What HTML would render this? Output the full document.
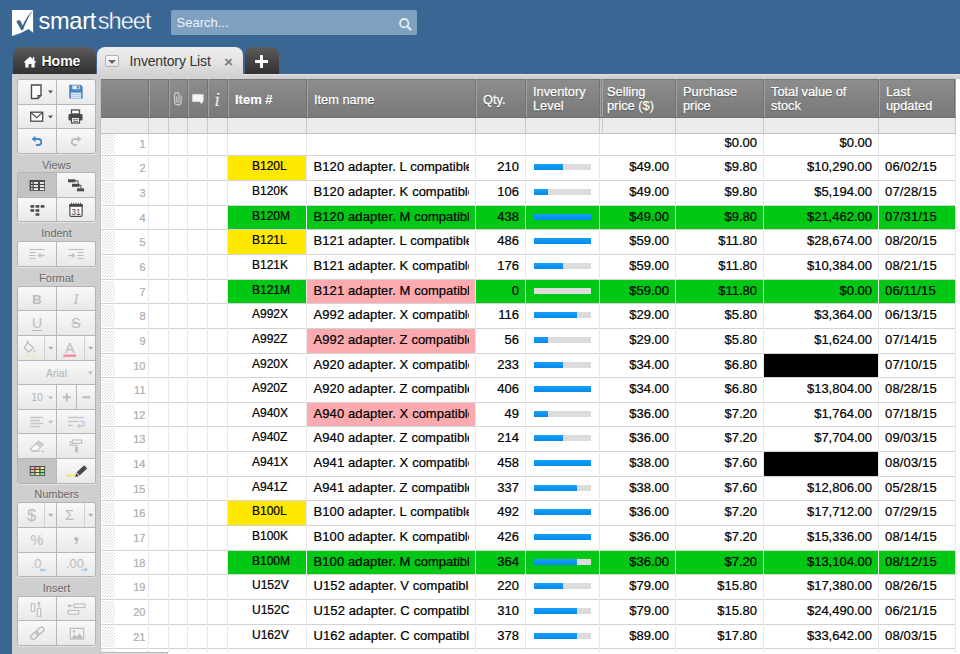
<!DOCTYPE html>
<html><head><meta charset="utf-8"><title>Inventory List - Smartsheet</title>
<style>
*{box-sizing:border-box;margin:0;padding:0}
html,body{width:960px;height:654px;overflow:hidden}
body{background:#3a6693;font-family:"Liberation Sans",Arial,sans-serif;position:relative;color:#000}
#logo{position:absolute;left:11.8px;top:9.8px}
#brand{position:absolute;left:38.5px;top:7.5px;font-size:23.6px;line-height:26px;color:#fff;white-space:nowrap}
#brand .a{letter-spacing:-0.3px}
#brand .b{-webkit-text-stroke:0.35px #3a6693;letter-spacing:-1px;margin-left:1.8px}
#search{position:absolute;left:170.5px;top:10px;width:246px;height:25px;background:#80a0c0;border-radius:2px;color:#eef3f8;font-size:13px;line-height:25px;padding-left:6px}
#search svg{position:absolute;left:227.3px;top:6.5px}
.tab{position:absolute;top:47px;height:27px;border-radius:8px 8px 0 0}
#thome{left:12.5px;width:83.3px;height:26.5px;background:linear-gradient(#5c5c5c,#474747 45%,#333);color:#fff;font-weight:bold;font-size:14px;line-height:29px}
#thome span{position:absolute;left:29px;top:0;text-shadow:0 1px 1px #000}
#thome svg{position:absolute;left:10.5px;top:8.5px}
#tinv{left:97px;width:146px;height:32.5px;background:linear-gradient(#eee,#e4e4e4 45%,#d2d2d2 84%);font-size:14px;line-height:29px;color:#333}
#tinv span.t{position:absolute;left:32.5px;top:0;letter-spacing:-0.15px}
#tinv span.x{position:absolute;left:127px;top:-0.5px;font-size:15.5px;color:#7a7a7a;-webkit-text-stroke:.5px #7a7a7a}
#tinv .dd{position:absolute;left:7.5px;top:8px;width:14.5px;height:12px;border:1px solid #b4b4b4;border-radius:2px;background:linear-gradient(#fdfdfd,#e4e4e4)}
#tinv .dd:after{content:"";position:absolute;left:2.5px;top:3.5px;border:4px solid transparent;border-top:4px solid #666;border-bottom:none}
#tplus{left:245px;width:33.5px;height:26.5px;background:linear-gradient(#5c5c5c,#474747 45%,#333);color:#fff}
#tplus:before{content:"";position:absolute;left:10px;top:13px;width:13px;height:3px;background:#fff}
#tplus:after{content:"";position:absolute;left:15px;top:8px;width:3px;height:13px;background:#fff}
#strip{position:absolute;left:12px;top:73.5px;width:948px;height:6px;background:linear-gradient(#e4e4e4,#d2d2d2 30%,#cbcbcb)}
#panel{position:absolute;left:12px;top:73.5px;width:89px;height:581px;background:#cfcfcf}#panel:after{content:"";position:absolute;left:88px;top:5.5px;width:1px;bottom:0;background:#c2c2c2}
.lbl{position:absolute;left:0;width:89px;text-align:center;font-size:11px;line-height:14px;color:#666;text-shadow:0 1px 0 #e4e4e4}
.grp{position:absolute;left:5px;width:79px;border:1px solid #b3b3b3;border-radius:2.5px;background:#b7b7b7;overflow:hidden;box-shadow:0 1px 0 #e2e2e2}
.bt{position:absolute;background:linear-gradient(#f8f8f8,#e9e9e9);overflow:hidden}
.bt.sel{background:#c3c3c3}
.bt svg{position:absolute;left:0;top:0}
.bt span{position:absolute;left:0;right:0;text-align:center;color:#bdbdbd}
/* grid */
#grid{position:absolute;left:101px;top:79px;width:859px;height:575px;background:#fff;overflow:hidden}
#hdr{z-index:4;position:absolute;left:0;top:0;width:855px;overflow:hidden;height:39px;background:linear-gradient(#777 0,#777 1px,#8d8d8d 1px,#838383 50%,#797979);border-bottom:1px solid #727272}
.h{position:absolute;top:0;height:38px;border-right:1px solid #a0a0a0;box-shadow:inset -1px 0 0 #727272;color:#fff;font-size:12.8px;line-height:14.2px;padding:6px 0 0 6px;-webkit-text-stroke:.25px #fff;text-shadow:0 1px 1px rgba(0,0,0,.45);white-space:nowrap;overflow:hidden}
.h.one{padding-top:14px}
.h.bold{font-weight:bold;font-size:13px}
#flt{z-index:4;position:absolute;left:0;top:39px;width:855px;height:16px;background:#ebebeb;border-bottom:1px solid #c4c4c4}
#flt i{position:absolute;top:0;height:15px;width:1px;background:#c9c9c9}
.r{position:absolute;left:0;width:855px;border-bottom:1px solid #d3d3d3;background:#fff;font-size:13px;line-height:15px;white-space:nowrap;-webkit-text-stroke:.22px currentColor}
.c{position:absolute;top:0;bottom:0;border-right:0;overflow:hidden;padding:2.5px 0 0 0}
.r .c:after{content:"";position:absolute;right:0;top:0;bottom:0;width:0}
.vl{position:absolute;top:54px;width:1px;height:521px;background:#e9e9e9;z-index:2}
.hatch{position:absolute;left:1px;top:1px;bottom:1px;width:13px;background:repeating-linear-gradient(135deg,#fff 0,#fff 1.1px,#dcdcdc 1.1px,#dcdcdc 2.12px)}
.rn{color:#acacac;font-size:11px;text-align:right;padding:4.5px 2.5px 0 0}
.c0{padding-left:24px;padding-top:3.2px;font-size:12px;line-height:14px}
.c1{padding-left:6.5px;padding-right:7px;background:#fff;letter-spacing:.11px}.c1 u{text-decoration:none;letter-spacing:0}
.c1:before{content:"";position:absolute;right:0;top:0;bottom:0;width:6px;background:inherit}
.c2,.c4,.c5,.c6{text-align:right;padding-right:6px}
.c7{padding-left:6px;letter-spacing:.15px}
.y{background:#ffe800}
.gg{background:#00c814}
.p{background:#fbabb0}
.k{background:#000}
.g .c0,.g .c1,.g .c2,.g .c3,.g .c4,.g .c5,.g .c6,.g .c7{}
.bar{position:absolute;left:8px;top:7.5px;width:57px;height:6px;background:#dcdcdc;display:block}
.bar i{display:block;height:6px;background:linear-gradient(#16a0fb,#0489ea)}
#bot{position:absolute;left:0;top:572.5px;width:859px;height:3px;background:#fff;z-index:3}#bot b{position:absolute;left:0;top:0;width:67px;height:3px;background:#dadada;border-top:1px solid #b9b9b9;border-right:1px solid #b9b9b9}
.rn{left:0px;width:47px}
.e1{left:48px;width:19px}
.e2{left:68px;width:18px}
.e3{left:87px;width:19px}
.e4{left:107px;width:19px}
.c0{left:127px;width:78px}
.c1{left:206px;width:168px}
.c2{left:375px;width:49px}
.c3{left:425px;width:73px}
.c4{left:499px;width:75px}
.c5{left:575px;width:87px}
.c6{left:663px;width:114px}
.c7{left:778px;width:76px}
</style></head><body>
<svg id="logo" width="22" height="27" viewBox="0 0 22 27"><path d="M0,0H21.1V22.7L16.6,18.9Q9,23.6 0,25.9Z" fill="#fff"/><path d="M4.4,11.4Q6.4,9.6 8.2,10.6L10.7,15.4Q14.6,6.2 21.1,0.2Q15.2,8.4 10.9,20.2L9.3,20.2Z" fill="#3a6693"/></svg>
<div id="brand"><span class="a">smart</span><span class="b">sheet</span></div>
<div id="search">Search...<svg width="16" height="16" viewBox="0 0 16 16"><circle cx="6.2" cy="6.2" r="4.2" fill="none" stroke="#e3eaf2" stroke-width="1.8"/><path d="M9.4 9.4L12.6 12.6" stroke="#e3eaf2" stroke-width="2.1" stroke-linecap="round"/></svg></div>
<div id="strip"></div>
<div id="thome" class="tab"><svg width="14" height="12.3" viewBox="0 0 16 14"><path d="M8,0.5L0.5,7.5H2.6V13H6.4V9H9.6V13H13.4V7.5H15.5Z" fill="#fff"/><rect x="11.2" y="1.2" width="1.8" height="3.5" fill="#fff"/></svg><span>Home</span></div>
<div id="tinv" class="tab"><b class="dd"></b><span class="t">Inventory List</span><span class="x">×</span></div>
<div id="tplus" class="tab"></div>
<div id="panel">
<div class="lbl" style="top:84.0px">Views</div>
<div class="lbl" style="top:152.8px">Indent</div>
<div class="lbl" style="top:197.2px">Format</div>
<div class="lbl" style="top:413.6px">Numbers</div>
<div class="lbl" style="top:507.2px">Insert</div>
<div class="grp" style="top:5.5px;height:75px">
<div class="bt" style="left:0px;top:0px;width:38px;height:24px"><svg width="38" height="24" viewBox="0 0 38 24"><path d="M13.5,5h9.5v10.5l-3,3h-6.5z" fill="#fff" stroke="#4a4a4a" stroke-width="1.4"/><path d="M23,15.5h-3v3" fill="none" stroke="#4a4a4a" stroke-width="1.2"/><path d="M30.0,10.5h5l-2.5,3z" fill="#555"/></svg></div>
<div class="bt" style="left:39px;top:0px;width:38px;height:24px"><svg width="38" height="24" viewBox="0 0 38 24"><path d="M12.2,4.8h11.5l2,2v11.8h-13.5z" fill="#4d84bf"/><rect x="15.3" y="5.6" width="7.4" height="3.6" fill="#e4edf7"/><rect x="20" y="6.2" width="1.6" height="2.4" fill="#3d6fa5"/><rect x="13.9" y="12.6" width="10.2" height="5.6" fill="#dce8f4"/><path d="M13.9,14.5h10.2M13.9,16.4h10.2" stroke="#a9c4e2" stroke-width=".8"/></svg></div>
<div class="bt" style="left:0px;top:25px;width:38px;height:23px"><svg width="38" height="24" viewBox="0 0 38 24"><rect x="12.7" y="7.2" width="12" height="9" fill="#fff" stroke="#4a4a4a" stroke-width="1.3"/><path d="M12.7,7.4l6,5.2l6,-5.2" fill="none" stroke="#4a4a4a" stroke-width="1.2"/><path d="M30.0,10.5h5l-2.5,3z" fill="#555"/></svg></div>
<div class="bt" style="left:39px;top:25px;width:38px;height:23px"><svg width="38" height="24" viewBox="0 0 38 24"><rect x="14.5" y="5" width="8" height="4" fill="#fff" stroke="#4a4a4a" stroke-width="1.3"/><rect x="11.5" y="9" width="14" height="6.5" rx="1" fill="#4a4a4a"/><rect x="14.5" y="12.5" width="8" height="5.5" fill="#fff" stroke="#4a4a4a" stroke-width="1.2"/><path d="M16,14.7h5M16,16.4h5" stroke="#4a4a4a" stroke-width=".8"/></svg></div>
<div class="bt" style="left:0px;top:49px;width:38px;height:24px"><svg width="38" height="24" viewBox="0 0 38 24"><path d="M16,10h4.3a3,3 0 0 1 0,6h-2.3" fill="none" stroke="#4685c6" stroke-width="1.8"/><path d="M13.6,10l3.8,-3.2v6.4z" fill="#4685c6"/></svg></div>
<div class="bt" style="left:39px;top:49px;width:38px;height:24px"><svg width="38" height="24" viewBox="0 0 38 24"><path d="M22,10h-4.3a3,3 0 0 0 0,6h2.3" fill="none" stroke="#bdbdbd" stroke-width="1.8"/><path d="M24.4,10l-3.8,-3.2v6.4z" fill="#bdbdbd"/></svg></div>
</div>
<div class="grp" style="top:98.5px;height:50px">
<div class="bt sel" style="left:0px;top:0px;width:38px;height:24px"><svg width="38" height="24" viewBox="0 0 38 24"><rect x="11.6" y="7" width="15.4" height="10.8" fill="#484848"/><g fill="#fff"><rect x="13.2" y="9.1" width="1.3" height="1.7"/><rect x="15.8" y="9.1" width="4.2" height="1.7"/><rect x="22" y="9.1" width="4.2" height="1.7"/><rect x="13.2" y="12.2" width="1.3" height="1.7"/><rect x="15.8" y="12.2" width="4.2" height="1.7"/><rect x="22" y="12.2" width="4.2" height="1.7"/><rect x="13.2" y="15.2" width="1.3" height="1.7"/><rect x="15.8" y="15.2" width="4.2" height="1.7"/><rect x="22" y="15.2" width="4.2" height="1.7"/></g></svg></div>
<div class="bt" style="left:39px;top:0px;width:38px;height:24px"><svg width="38" height="24" viewBox="0 0 38 24"><rect x="11" y="6.3" width="7.5" height="3" fill="#4a4a4a"/><rect x="15" y="10.8" width="7.5" height="3" fill="#4a4a4a"/><rect x="20" y="15.3" width="7" height="3" fill="#4a4a4a"/><path d="M18.5,7.8h2.5v3M22.5,12.3h1.5v3" fill="none" stroke="#4a4a4a" stroke-width="1"/></svg></div>
<div class="bt" style="left:0px;top:25px;width:38px;height:23px"><svg width="38" height="24" viewBox="0 0 38 24"><g fill="#4a4a4a"><rect x="12.5" y="7.1" width="3.7" height="2.6"/><rect x="17.6" y="7.1" width="3.7" height="2.6"/><rect x="22.7" y="7.1" width="3.7" height="2.6"/><rect x="12.5" y="11.2" width="3.7" height="2.6"/><rect x="17.6" y="11.2" width="3.7" height="2.6"/><rect x="17.6" y="15.2" width="3.7" height="2.6"/></g></svg></div>
<div class="bt" style="left:39px;top:25px;width:38px;height:23px"><svg width="38" height="24" viewBox="0 0 38 24"><rect x="12.9" y="6.7" width="12.2" height="11.6" rx="1" fill="#fff" stroke="#4a4a4a" stroke-width="1.2"/><rect x="12.3" y="6" width="13.4" height="2.8" fill="#4a4a4a"/><path d="M14.5,4.8v2M16.7,4.8v2M19,4.8v2M21.3,4.8v2M23.5,4.8v2" stroke="#4a4a4a" stroke-width="1"/><text x="19" y="17" font-family="Liberation Sans, Arial, sans-serif" font-size="8.6" text-anchor="middle" fill="#4a4a4a">31</text></svg></div>
</div>
<div class="grp" style="top:167.5px;height:26px">
<div class="bt" style="left:0px;top:0px;width:38px;height:24px"><svg width="38" height="24" viewBox="0 0 38 24"><path d="M11.5,7.5h15M11.5,10.5h6M11.5,13.5h6M11.5,16.5h6" stroke="#bcbcbc" stroke-width="1.1"/><path d="M26.5,13.5h-5" stroke="#bcbcbc" stroke-width="1.4"/><path d="M19.6,13.5l3,-2.4v4.8z" fill="#bcbcbc"/></svg></div>
<div class="bt" style="left:39px;top:0px;width:38px;height:24px"><svg width="38" height="24" viewBox="0 0 38 24"><path d="M11.5,7.5h15M20.5,10.5h6M20.5,13.5h6M20.5,16.5h6" stroke="#bcbcbc" stroke-width="1.1"/><path d="M11.5,13.5h5" stroke="#bcbcbc" stroke-width="1.4"/><path d="M18.4,13.5l-3,-2.4v4.8z" fill="#bcbcbc"/></svg></div>
</div>
<div class="grp" style="top:212.5px;height:198px">
<div class="bt" style="left:0px;top:0px;width:38px;height:23px"><span style="font-size:13px;line-height:15px;top:5px;color:#bcbcbc;font-weight:bold">B</span></div>
<div class="bt" style="left:39px;top:0px;width:38px;height:23px"><span style="font-size:15px;line-height:17px;top:3.5px;color:#bcbcbc;font-style:italic;font-family:'Liberation Serif',serif">I</span></div>
<div class="bt" style="left:0px;top:24px;width:38px;height:24px"><span style="font-size:14px;line-height:16px;top:3.5px;color:#bcbcbc;text-decoration:underline;text-underline-offset:2px">U</span></div>
<div class="bt" style="left:39px;top:24px;width:38px;height:24px"><span style="font-size:14px;line-height:16px;top:4px;color:#bcbcbc;text-decoration:line-through">S</span></div>
<div class="bt" style="left:0px;top:49px;width:25.5px;height:24px"><svg width="25" height="24" viewBox="0 0 25 24"><path d="M9.5,6.5l5.8,5.3l-4.3,4.4l-4.6,-4.4z" fill="none" stroke="#bcbcbc" stroke-width="1.2"/><path d="M9.5,6.5v-2.5" stroke="#bcbcbc" stroke-width="1.1"/><path d="M16.6,13.2q1.6,2.3 0,3.2q-1.6,-0.9 0,-3.2z" fill="#bcbcbc"/><rect x="6" y="18.6" width="12" height="2.2" fill="#ececbc"/></svg></div>
<div class="bt" style="left:26.5px;top:49px;width:12.5px;height:24px;border-left:1px solid #d2d2d2;margin-left:-1px;padding-left:0"><svg width="12" height="24" viewBox="0 0 12 24"><path d="M3.3,10.7h5l-2.5,3z" fill="#aaa"/></svg></div>
<div class="bt" style="left:39px;top:49px;width:26.5px;height:24px"><svg width="26" height="24" viewBox="0 0 26 24"><text x="12.8" y="16.6" font-family="Liberation Sans, Arial, sans-serif" font-size="14.5" text-anchor="middle" fill="#bcbcbc">A</text><rect x="6.3" y="18.5" width="12.8" height="2.4" fill="#ee8d94"/></svg></div>
<div class="bt" style="left:66.5px;top:49px;width:11.5px;height:24px;border-left:1px solid #d2d2d2;margin-left:-1px;padding-left:0"><svg width="12" height="24" viewBox="0 0 12 24"><path d="M3.3,10.7h5l-2.5,3z" fill="#aaa"/></svg></div>
<div class="bt" style="left:0px;top:74px;width:77px;height:23px"><span style="font-size:10.5px;line-height:14px;top:4.5px;color:#b4b4b4">Arial</span><svg width="77" height="24" viewBox="0 0 77 24" style="left:0"><path d="M69.8,10.5h5l-2.5,3z" fill="#bbb"/></svg></div>
<div class="bt" style="left:0px;top:98px;width:38px;height:24px"><span style="font-size:10.5px;line-height:14px;top:4.5px;color:#b4b4b4">10</span><svg width="38" height="24" viewBox="0 0 38 24"><path d="M30.1,11.5h5l-2.5,3z" fill="#bbb"/></svg></div>
<div class="bt" style="left:39px;top:98px;width:19px;height:24px"><svg width="19" height="24" viewBox="0 0 19 24"><path d="M5.8,12.3h8M9.8,8.3v8" stroke="#bcbcbc" stroke-width="2"/></svg></div>
<div class="bt" style="left:59px;top:98px;width:18px;height:24px"><svg width="19" height="24" viewBox="0 0 19 24"><path d="M5.5,12.3h7.6" stroke="#bcbcbc" stroke-width="2"/></svg></div>
<div class="bt" style="left:0px;top:123px;width:38px;height:23px"><svg width="38" height="24" viewBox="0 0 38 24"><path d="M12.3,7.6h13M12.3,10.5h9.6M12.3,13.5h13M12.3,16.4h9.6" stroke="#c6c6c6" stroke-width="1.5"/><path d="M30.1,10.8h5l-2.5,3z" fill="#bbb"/></svg></div>
<div class="bt" style="left:39px;top:123px;width:38px;height:23px"><svg width="38" height="24" viewBox="0 0 38 24"><path d="M11,7.6h16M11,11.5h11M11,15.4h5" stroke="#c6c6c6" stroke-width="1.5"/><path d="M23.5,11.5h1.5a2.2,2.2 0 0 1 0,4.4h-2.5" fill="none" stroke="#b4cdea" stroke-width="1.4"/><path d="M19.6,15.9l3.2,-2.4v4.8z" fill="#b4cdea"/></svg></div>
<div class="bt" style="left:0px;top:147px;width:38px;height:24px"><svg width="38" height="24" viewBox="0 0 38 24"><path d="M20.3,7.2l4.8,2.9l-5.6,6.6h-5l-2.2,-1.5z" fill="#fbfbfb" stroke="#bcbcbc" stroke-width="1.1"/><path d="M20.3,7.2l4.8,2.9l-2.9,3.4l-4.9,-2.9z" fill="#cfcfcf"/><path d="M13,17.3h13" stroke="#bcbcbc" stroke-width="1" stroke-dasharray="6 1.2 2 1.2"/></svg></div>
<div class="bt" style="left:39px;top:147px;width:38px;height:24px"><svg width="38" height="24" viewBox="0 0 38 24"><rect x="15.3" y="6" width="9.4" height="3.4" rx=".6" fill="#f6f6f6" stroke="#bcbcbc" stroke-width="1.2"/><path d="M15.3,7.7h-2v3.6h6.2v2" fill="none" stroke="#bcbcbc" stroke-width="1.1"/><rect x="18.1" y="12.8" width="2.8" height="5.6" rx=".6" fill="#bcbcbc"/></svg></div>
<div class="bt sel" style="left:0px;top:172px;width:38px;height:24px"><svg width="38" height="24" viewBox="0 0 38 24"><rect x="11.7" y="7" width="15.4" height="9.8" fill="#4a4a4a"/><rect x="12.7" y="8" width="3.7" height="2" fill="#f7a3ab"/><rect x="17.6" y="8" width="3.7" height="2" fill="#f7a3ab"/><rect x="22.5" y="8" width="3.7" height="2" fill="#f6ee7c"/><rect x="12.7" y="11" width="3.7" height="2" fill="#f7a3ab"/><rect x="17.6" y="11" width="3.7" height="2" fill="#f6ee7c"/><rect x="22.5" y="11" width="3.7" height="2" fill="#7fe89b"/><rect x="12.7" y="14" width="3.7" height="2" fill="#7fe89b"/><rect x="17.6" y="14" width="3.7" height="2" fill="#f6ee7c"/><rect x="22.5" y="14" width="3.7" height="2" fill="#7fe89b"/></svg></div>
<div class="bt" style="left:39px;top:172px;width:38px;height:24px"><svg width="38" height="24" viewBox="0 0 38 24"><path d="M19.6,13.2l7.6,-7l3,3.2l-7.6,7z" fill="#484848"/><path d="M19,13.9l2.9,3.1l-3.6,1.2z" fill="#484848"/><rect x="9.2" y="15.3" width="8.8" height="2.3" fill="#efe873"/></svg></div>
</div>
<div class="grp" style="top:428.5px;height:75px">
<div class="bt" style="left:0px;top:0px;width:25.5px;height:24px"><svg width="26" height="24" viewBox="0 0 26 24"><text x="13.5" y="17.8" font-family="Liberation Sans, Arial, sans-serif" font-size="16.5" text-anchor="middle" fill="#bcbcbc">$</text></svg></div>
<div class="bt" style="left:26.5px;top:0px;width:12.5px;height:24px;border-left:1px solid #d2d2d2;margin-left:-1px;padding-left:0"><svg width="12" height="24" viewBox="0 0 12 24"><path d="M3.3,10.7h5l-2.5,3z" fill="#aaa"/></svg></div>
<div class="bt" style="left:39px;top:0px;width:26.5px;height:24px"><svg width="26" height="24" viewBox="0 0 26 24"><text x="12.5" y="17" font-family="Liberation Sans, Arial, sans-serif" font-size="14.5" text-anchor="middle" fill="#bcbcbc">Σ</text></svg></div>
<div class="bt" style="left:66.5px;top:0px;width:11.5px;height:24px;border-left:1px solid #d2d2d2;margin-left:-1px;padding-left:0"><svg width="12" height="24" viewBox="0 0 12 24"><path d="M3.3,10.7h5l-2.5,3z" fill="#aaa"/></svg></div>
<div class="bt" style="left:0px;top:25px;width:38px;height:24px"><span style="font-size:14.5px;line-height:16.5px;top:4px;color:#bcbcbc;">%</span></div>
<div class="bt" style="left:39px;top:25px;width:38px;height:24px"><svg width="38" height="24" viewBox="0 0 38 24"><circle cx="19.2" cy="10.9" r="2.1" fill="#bcbcbc"/><path d="M21.3,10.9q0.2,4 -3.2,5.6l-0.4,-0.9q2,-1.3 1.6,-3.4z" fill="#bcbcbc"/></svg></div>
<div class="bt" style="left:0px;top:50px;width:38px;height:23px"><span style="font-size:13px;line-height:15px;top:3px;color:#bcbcbc;right:2px">.0</span><svg width="38" height="24" viewBox="0 0 38 24"><path d="M23,17h5" stroke="#9cc3ea" stroke-width="1.3"/><path d="M21.6,17l2.6,-2.1v4.2z" fill="#9cc3ea"/></svg></div>
<div class="bt" style="left:39px;top:50px;width:38px;height:23px"><span style="font-size:13px;line-height:15px;top:3px;color:#bcbcbc;right:2px">.00</span><svg width="38" height="24" viewBox="0 0 38 24"><path d="M24.5,16.6h5" stroke="#9cc3ea" stroke-width="1.3"/><path d="M30.9,16.6l-2.6,-2.1v4.2z" fill="#9cc3ea"/></svg></div>
</div>
<div class="grp" style="top:522.5px;height:50px">
<div class="bt" style="left:0px;top:0px;width:38px;height:23px"><svg width="38" height="24" viewBox="0 0 38 24"><g transform="translate(1,0.5)"><rect x="12.3" y="6.3" width="3.4" height="7.5" fill="#f4f4f4" stroke="#bcbcbc" stroke-width="1.1"/><rect x="18.3" y="10.8" width="3.4" height="8" fill="#f4f4f4" stroke="#bcbcbc" stroke-width="1.1"/><path d="M20,9.3v-4.3" stroke="#bcbcbc" stroke-width="1.2"/><path d="M20,4l-2,2.5h4z" fill="#bcbcbc"/></g></svg></div>
<div class="bt" style="left:39px;top:0px;width:38px;height:23px"><svg width="38" height="24" viewBox="0 0 38 24"><rect x="17.3" y="7" width="10.6" height="3.6" fill="#f4f4f4" stroke="#bcbcbc" stroke-width="1.1"/><rect x="11.3" y="13.5" width="10.4" height="3.6" fill="#f4f4f4" stroke="#bcbcbc" stroke-width="1.1"/><path d="M11.5,8.8h4.3" stroke="#bcbcbc" stroke-width="1.2"/><path d="M10.3,8.8l2.6,-2v4z" fill="#bcbcbc"/></svg></div>
<div class="bt" style="left:0px;top:24px;width:38px;height:24px"><svg width="38" height="24" viewBox="0 0 38 24"><g fill="none" stroke="#bcbcbc" stroke-width="1.4" transform="rotate(-42 19.3 12.2)"><rect x="11.3" y="9.8" width="9" height="4.8" rx="2.4"/><rect x="18.3" y="9.8" width="9" height="4.8" rx="2.4"/></g></svg></div>
<div class="bt" style="left:39px;top:24px;width:38px;height:24px"><svg width="38" height="24" viewBox="0 0 38 24"><g transform="translate(1,0.7)"><rect x="12.3" y="6.7" width="13.4" height="10.6" fill="#f1f1f1" stroke="#bcbcbc" stroke-width="1.2"/><path d="M13,16.7l3.6,-4l2.4,2.3l2.6,-3.3l3.6,5z" fill="#bcbcbc"/><circle cx="16" cy="9.8" r="1.2" fill="#bcbcbc"/></g></svg></div>
</div>
</div>
<div id="grid">
 <div id="hdr">
<div class="h " style="left:0px;width:49px"></div>
<div class="h " style="left:49px;width:20px"></div>
<div class="h " style="left:69px;width:19px"><svg width="10" height="15" viewBox="0 0 10 15" style="position:absolute;left:3.3px;top:12.3px"><path d="M8.2,4.6v6a3.3,3.3 0 0 1 -6.6,0v-6.8a2.2,2.2 0 0 1 4.4,0v6.4a1.1,1.1 0 0 1 -2.2,0v-5" fill="none" stroke="#cfcfcf" stroke-width="1.15"/></svg></div>
<div class="h " style="left:88px;width:20px"><svg width="12" height="12" viewBox="0 0 12 12" style="position:absolute;left:3px;top:15px"><path d="M0.3,0.3h11.2v7.4h-1.3v2.6l-2.8,-2.6h-7.1z" fill="#f4f4f4"/></svg></div>
<div class="h " style="left:108px;width:20px"><span style="position:absolute;left:5.5px;top:9.5px;font-family:'Liberation Serif',serif;font-style:italic;font-size:19px;line-height:21px;color:#ececec;-webkit-text-stroke:.3px #ececec">i</span></div>
<div class="h one bold" style="left:128px;width:79px">Item #</div>
<div class="h one" style="left:207px;width:169px">Item name</div>
<div class="h one" style="left:376px;width:50px">Qty.</div>
<div class="h " style="left:426px;width:74px">Inventory<br>Level</div>
<div class="h " style="left:500px;width:76px">Selling<br>price ($)</div>
<div class="h " style="left:576px;width:88px">Purchase<br>price</div>
<div class="h " style="left:664px;width:115px">Total value of<br>stock</div>
<div class="h " style="left:779px;width:76px">Last<br>updated</div>
<div style="position:absolute;left:501px;top:0;width:1px;height:38px;background:#a4a4a4"></div>
 </div>
 <div id="flt"><i style="left:47px"></i><i style="left:67px"></i><i style="left:86px"></i><i style="left:106px"></i><i style="left:126px"></i><i style="left:205px"></i><i style="left:374px"></i><i style="left:424px"></i><i style="left:498px"></i><i style="left:574px"></i><i style="left:662px"></i><i style="left:777px"></i><i style="left:854px"></i><i style="left:501px"></i></div>
<div class="r" style="top:53px;height:24px">
<b class="hatch"></b><span class="c rn">1</span>
<span class="c e1"></span>
<span class="c e2"></span>
<span class="c e3"></span>
<span class="c e4"></span>
<span class="c c0"></span>
<span class="c c1"></span>
<span class="c c2"></span>
<span class="c c3"></span>
<span class="c c4"></span>
<span class="c c5">$0.00</span>
<span class="c c6">$0.00</span>
<span class="c c7"></span>
</div>
<div class="r" style="top:77px;height:25px">
<b class="hatch"></b><span class="c rn">2</span>
<span class="c e1"></span>
<span class="c e2"></span>
<span class="c e3"></span>
<span class="c e4"></span>
<span class="c c0 y">B120L</span>
<span class="c c1">B120 adapter. L <u>compatible</u></span>
<span class="c c2">210</span>
<span class="c c3"><i class="bar"><i style="width:50%"></i></i></span>
<span class="c c4">$49.00</span>
<span class="c c5">$9.80</span>
<span class="c c6">$10,290.00</span>
<span class="c c7">06/02/15</span>
</div>
<div class="r" style="top:102px;height:25px">
<b class="hatch"></b><span class="c rn">3</span>
<span class="c e1"></span>
<span class="c e2"></span>
<span class="c e3"></span>
<span class="c e4"></span>
<span class="c c0">B120K</span>
<span class="c c1">B120 adapter. K <u>compatible</u></span>
<span class="c c2">106</span>
<span class="c c3"><i class="bar"><i style="width:25%"></i></i></span>
<span class="c c4">$49.00</span>
<span class="c c5">$9.80</span>
<span class="c c6">$5,194.00</span>
<span class="c c7">07/28/15</span>
</div>
<div class="r g" style="top:127px;height:24px">
<b class="hatch"></b><span class="c rn">4</span>
<span class="c e1"></span>
<span class="c e2"></span>
<span class="c e3"></span>
<span class="c e4"></span>
<span class="c c0 gg">B120M</span>
<span class="c c1 gg">B120 adapter. M <u>compatible</u></span>
<span class="c c2 gg">438</span>
<span class="c c3 gg"><i class="bar"><i style="width:100%"></i></i></span>
<span class="c c4 gg">$49.00</span>
<span class="c c5 gg">$9.80</span>
<span class="c c6 gg">$21,462.00</span>
<span class="c c7 gg">07/31/15</span>
</div>
<div class="r" style="top:151px;height:25px">
<b class="hatch"></b><span class="c rn">5</span>
<span class="c e1"></span>
<span class="c e2"></span>
<span class="c e3"></span>
<span class="c e4"></span>
<span class="c c0 y">B121L</span>
<span class="c c1">B121 adapter. L <u>compatible</u></span>
<span class="c c2">486</span>
<span class="c c3"><i class="bar"><i style="width:100%"></i></i></span>
<span class="c c4">$59.00</span>
<span class="c c5">$11.80</span>
<span class="c c6">$28,674.00</span>
<span class="c c7">08/20/15</span>
</div>
<div class="r" style="top:176px;height:25px">
<b class="hatch"></b><span class="c rn">6</span>
<span class="c e1"></span>
<span class="c e2"></span>
<span class="c e3"></span>
<span class="c e4"></span>
<span class="c c0">B121K</span>
<span class="c c1">B121 adapter. K <u>compatible</u></span>
<span class="c c2">176</span>
<span class="c c3"><i class="bar"><i style="width:50%"></i></i></span>
<span class="c c4">$59.00</span>
<span class="c c5">$11.80</span>
<span class="c c6">$10,384.00</span>
<span class="c c7">08/21/15</span>
</div>
<div class="r g" style="top:201px;height:24px">
<b class="hatch"></b><span class="c rn">7</span>
<span class="c e1"></span>
<span class="c e2"></span>
<span class="c e3"></span>
<span class="c e4"></span>
<span class="c c0 gg">B121M</span>
<span class="c c1 p">B121 adapter. M <u>compatible</u></span>
<span class="c c2 gg">0</span>
<span class="c c3 gg"><i class="bar"><i style="width:0%"></i></i></span>
<span class="c c4 gg">$59.00</span>
<span class="c c5 gg">$11.80</span>
<span class="c c6 gg">$0.00</span>
<span class="c c7 gg">06/11/15</span>
</div>
<div class="r" style="top:225px;height:25px">
<b class="hatch"></b><span class="c rn">8</span>
<span class="c e1"></span>
<span class="c e2"></span>
<span class="c e3"></span>
<span class="c e4"></span>
<span class="c c0">A992X</span>
<span class="c c1">A992 adapter. X <u>compatible</u></span>
<span class="c c2">116</span>
<span class="c c3"><i class="bar"><i style="width:75%"></i></i></span>
<span class="c c4">$29.00</span>
<span class="c c5">$5.80</span>
<span class="c c6">$3,364.00</span>
<span class="c c7">06/13/15</span>
</div>
<div class="r" style="top:250px;height:25px">
<b class="hatch"></b><span class="c rn">9</span>
<span class="c e1"></span>
<span class="c e2"></span>
<span class="c e3"></span>
<span class="c e4"></span>
<span class="c c0">A992Z</span>
<span class="c c1 p">A992 adapter. Z <u>compatible</u></span>
<span class="c c2">56</span>
<span class="c c3"><i class="bar"><i style="width:25%"></i></i></span>
<span class="c c4">$29.00</span>
<span class="c c5">$5.80</span>
<span class="c c6">$1,624.00</span>
<span class="c c7">07/14/15</span>
</div>
<div class="r" style="top:275px;height:24px">
<b class="hatch"></b><span class="c rn">10</span>
<span class="c e1"></span>
<span class="c e2"></span>
<span class="c e3"></span>
<span class="c e4"></span>
<span class="c c0">A920X</span>
<span class="c c1">A920 adapter. X <u>compatible</u></span>
<span class="c c2">233</span>
<span class="c c3"><i class="bar"><i style="width:50%"></i></i></span>
<span class="c c4">$34.00</span>
<span class="c c5">$6.80</span>
<span class="c c6 k"></span>
<span class="c c7">07/10/15</span>
</div>
<div class="r" style="top:299px;height:25px">
<b class="hatch"></b><span class="c rn">11</span>
<span class="c e1"></span>
<span class="c e2"></span>
<span class="c e3"></span>
<span class="c e4"></span>
<span class="c c0">A920Z</span>
<span class="c c1">A920 adapter. Z <u>compatible</u></span>
<span class="c c2">406</span>
<span class="c c3"><i class="bar"><i style="width:100%"></i></i></span>
<span class="c c4">$34.00</span>
<span class="c c5">$6.80</span>
<span class="c c6">$13,804.00</span>
<span class="c c7">08/28/15</span>
</div>
<div class="r" style="top:324px;height:24px">
<b class="hatch"></b><span class="c rn">12</span>
<span class="c e1"></span>
<span class="c e2"></span>
<span class="c e3"></span>
<span class="c e4"></span>
<span class="c c0">A940X</span>
<span class="c c1 p">A940 adapter. X <u>compatible</u></span>
<span class="c c2">49</span>
<span class="c c3"><i class="bar"><i style="width:25%"></i></i></span>
<span class="c c4">$36.00</span>
<span class="c c5">$7.20</span>
<span class="c c6">$1,764.00</span>
<span class="c c7">07/18/15</span>
</div>
<div class="r" style="top:348px;height:25px">
<b class="hatch"></b><span class="c rn">13</span>
<span class="c e1"></span>
<span class="c e2"></span>
<span class="c e3"></span>
<span class="c e4"></span>
<span class="c c0">A940Z</span>
<span class="c c1">A940 adapter. Z <u>compatible</u></span>
<span class="c c2">214</span>
<span class="c c3"><i class="bar"><i style="width:50%"></i></i></span>
<span class="c c4">$36.00</span>
<span class="c c5">$7.20</span>
<span class="c c6">$7,704.00</span>
<span class="c c7">09/03/15</span>
</div>
<div class="r" style="top:373px;height:25px">
<b class="hatch"></b><span class="c rn">14</span>
<span class="c e1"></span>
<span class="c e2"></span>
<span class="c e3"></span>
<span class="c e4"></span>
<span class="c c0">A941X</span>
<span class="c c1">A941 adapter. X <u>compatible</u></span>
<span class="c c2">458</span>
<span class="c c3"><i class="bar"><i style="width:100%"></i></i></span>
<span class="c c4">$38.00</span>
<span class="c c5">$7.60</span>
<span class="c c6 k"></span>
<span class="c c7">08/03/15</span>
</div>
<div class="r" style="top:398px;height:24px">
<b class="hatch"></b><span class="c rn">15</span>
<span class="c e1"></span>
<span class="c e2"></span>
<span class="c e3"></span>
<span class="c e4"></span>
<span class="c c0">A941Z</span>
<span class="c c1">A941 adapter. Z <u>compatible</u></span>
<span class="c c2">337</span>
<span class="c c3"><i class="bar"><i style="width:75%"></i></i></span>
<span class="c c4">$38.00</span>
<span class="c c5">$7.60</span>
<span class="c c6">$12,806.00</span>
<span class="c c7">05/28/15</span>
</div>
<div class="r" style="top:422px;height:25px">
<b class="hatch"></b><span class="c rn">16</span>
<span class="c e1"></span>
<span class="c e2"></span>
<span class="c e3"></span>
<span class="c e4"></span>
<span class="c c0 y">B100L</span>
<span class="c c1">B100 adapter. L <u>compatible</u></span>
<span class="c c2">492</span>
<span class="c c3"><i class="bar"><i style="width:100%"></i></i></span>
<span class="c c4">$36.00</span>
<span class="c c5">$7.20</span>
<span class="c c6">$17,712.00</span>
<span class="c c7">07/29/15</span>
</div>
<div class="r" style="top:447px;height:25px">
<b class="hatch"></b><span class="c rn">17</span>
<span class="c e1"></span>
<span class="c e2"></span>
<span class="c e3"></span>
<span class="c e4"></span>
<span class="c c0">B100K</span>
<span class="c c1">B100 adapter. K <u>compatible</u></span>
<span class="c c2">426</span>
<span class="c c3"><i class="bar"><i style="width:100%"></i></i></span>
<span class="c c4">$36.00</span>
<span class="c c5">$7.20</span>
<span class="c c6">$15,336.00</span>
<span class="c c7">08/14/15</span>
</div>
<div class="r g" style="top:472px;height:24px">
<b class="hatch"></b><span class="c rn">18</span>
<span class="c e1"></span>
<span class="c e2"></span>
<span class="c e3"></span>
<span class="c e4"></span>
<span class="c c0 gg">B100M</span>
<span class="c c1 gg">B100 adapter. M <u>compatible</u></span>
<span class="c c2 gg">364</span>
<span class="c c3 gg"><i class="bar"><i style="width:75%"></i></i></span>
<span class="c c4 gg">$36.00</span>
<span class="c c5 gg">$7.20</span>
<span class="c c6 gg">$13,104.00</span>
<span class="c c7 gg">08/12/15</span>
</div>
<div class="r" style="top:496px;height:25px">
<b class="hatch"></b><span class="c rn">19</span>
<span class="c e1"></span>
<span class="c e2"></span>
<span class="c e3"></span>
<span class="c e4"></span>
<span class="c c0">U152V</span>
<span class="c c1">U152 adapter. V <u>compatible</u></span>
<span class="c c2">220</span>
<span class="c c3"><i class="bar"><i style="width:50%"></i></i></span>
<span class="c c4">$79.00</span>
<span class="c c5">$15.80</span>
<span class="c c6">$17,380.00</span>
<span class="c c7">08/26/15</span>
</div>
<div class="r" style="top:521px;height:25px">
<b class="hatch"></b><span class="c rn">20</span>
<span class="c e1"></span>
<span class="c e2"></span>
<span class="c e3"></span>
<span class="c e4"></span>
<span class="c c0">U152C</span>
<span class="c c1">U152 adapter. C <u>compatible</u></span>
<span class="c c2">310</span>
<span class="c c3"><i class="bar"><i style="width:75%"></i></i></span>
<span class="c c4">$79.00</span>
<span class="c c5">$15.80</span>
<span class="c c6">$24,490.00</span>
<span class="c c7">06/21/15</span>
</div>
<div class="r" style="top:546px;height:24px">
<b class="hatch"></b><span class="c rn">21</span>
<span class="c e1"></span>
<span class="c e2"></span>
<span class="c e3"></span>
<span class="c e4"></span>
<span class="c c0">U162V</span>
<span class="c c1">U162 adapter. C <u>compatible</u></span>
<span class="c c2">378</span>
<span class="c c3"><i class="bar"><i style="width:75%"></i></i></span>
<span class="c c4">$89.00</span>
<span class="c c5">$17.80</span>
<span class="c c6">$33,642.00</span>
<span class="c c7">08/03/15</span>
</div>
<div class="r" style="top:570px;height:25px">
<b class="hatch"></b><span class="c rn">22</span>
<span class="c e1"></span>
<span class="c e2"></span>
<span class="c e3"></span>
<span class="c e4"></span>
<span class="c c0"></span>
<span class="c c1"></span>
<span class="c c2"></span>
<span class="c c3"></span>
<span class="c c4"></span>
<span class="c c5"></span>
<span class="c c6"></span>
<span class="c c7"></span>
</div>
<div class="vl" style="left:47px"></div>
<div class="vl" style="left:67px"></div>
<div class="vl" style="left:86px"></div>
<div class="vl" style="left:106px"></div>
<div class="vl" style="left:126px"></div>
<div class="vl" style="left:205px"></div>
<div class="vl" style="left:374px"></div>
<div class="vl" style="left:424px"></div>
<div class="vl" style="left:498px"></div>
<div class="vl" style="left:574px"></div>
<div class="vl" style="left:662px"></div>
<div class="vl" style="left:777px"></div>
<div class="vl" style="left:854px"></div>
<div id="bot"><b></b></div>
</div>
</body></html>
